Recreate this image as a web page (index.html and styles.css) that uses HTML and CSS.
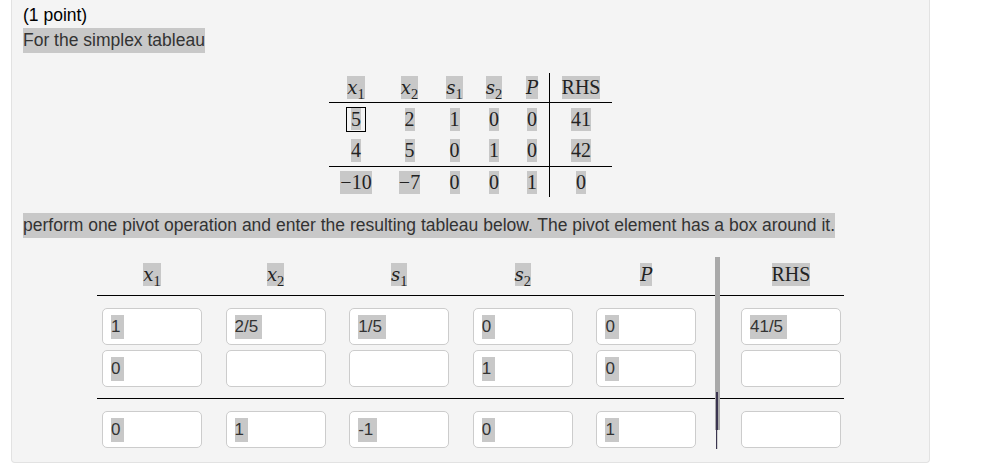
FILE: index.html
```html
<!DOCTYPE html>
<html>
<head>
<meta charset="utf-8">
<link rel="stylesheet" href="styles.css">
</head>
<body>
<div class="panel">
  <p class="line plain">(1 point)</p>
  <p class="line"><span class="hl">For the simplex tableau</span></p>

  <div class="tab1">
    <div class="c h"><span class="hl"><i>x</i><sub>1</sub></span></div>
    <div class="c h"><span class="hl"><i>x</i><sub>2</sub></span></div>
    <div class="c h"><span class="hl"><i>s</i><sub>1</sub></span></div>
    <div class="c h"><span class="hl"><i>s</i><sub>2</sub></span></div>
    <div class="c h"><span class="hl"><i>P</i></span></div>
    <div class="c h v"><span class="hl">RHS</span></div>

    <div class="c"><span class="box"><span class="hl">5</span></span></div>
    <div class="c"><span class="hl">2</span></div>
    <div class="c"><span class="hl">1</span></div>
    <div class="c"><span class="hl">0</span></div>
    <div class="c"><span class="hl">0</span></div>
    <div class="c v"><span class="hl">41</span></div>

    <div class="c"><span class="hl">4</span></div>
    <div class="c"><span class="hl">5</span></div>
    <div class="c"><span class="hl">0</span></div>
    <div class="c"><span class="hl">1</span></div>
    <div class="c"><span class="hl">0</span></div>
    <div class="c v"><span class="hl">42</span></div>

    <div class="c t"><span class="hl">−10</span></div>
    <div class="c t"><span class="hl">−7</span></div>
    <div class="c t"><span class="hl">0</span></div>
    <div class="c t"><span class="hl">0</span></div>
    <div class="c t"><span class="hl">1</span></div>
    <div class="c t v"><span class="hl">0</span></div>
  </div>

  <p class="line para"><span class="hl">perform one pivot operation and enter the resulting tableau below. The pivot element has a box around it.</span></p>

  <div class="tab2">
    <div class="bar"><div class="bar-a"></div><div class="bar-b"></div><div class="bar-c"></div></div>

    <div class="hd"><span class="hl"><i>x</i><sub>1</sub></span></div>
    <div class="hd"><span class="hl"><i>x</i><sub>2</sub></span></div>
    <div class="hd"><span class="hl"><i>s</i><sub>1</sub></span></div>
    <div class="hd"><span class="hl"><i>s</i><sub>2</sub></span></div>
    <div class="hd"><span class="hl"><i>P</i></span></div>
    <div class="hd last"><span class="hl">RHS</span></div>

    <div class="cell r1"><div class="inp"><span class="val">1</span></div></div>
    <div class="cell r1"><div class="inp"><span class="val">2/5</span></div></div>
    <div class="cell r1"><div class="inp"><span class="val">1/5</span></div></div>
    <div class="cell r1"><div class="inp"><span class="val">0</span></div></div>
    <div class="cell r1"><div class="inp"><span class="val">0</span></div></div>
    <div class="cell r1 last"><div class="inp"><span class="val">41/5</span></div></div>

    <div class="cell r2"><div class="inp"><span class="val">0</span></div></div>
    <div class="cell r2"><div class="inp"></div></div>
    <div class="cell r2"><div class="inp"></div></div>
    <div class="cell r2"><div class="inp"><span class="val">1</span></div></div>
    <div class="cell r2"><div class="inp"><span class="val">0</span></div></div>
    <div class="cell r2 last"><div class="inp"></div></div>

    <div class="cell r3"><div class="inp"><span class="val">0</span></div></div>
    <div class="cell r3"><div class="inp"><span class="val">1</span></div></div>
    <div class="cell r3"><div class="inp"><span class="val">-1</span></div></div>
    <div class="cell r3"><div class="inp"><span class="val">0</span></div></div>
    <div class="cell r3"><div class="inp"><span class="val">1</span></div></div>
    <div class="cell r3 last"><div class="inp"></div></div>
  </div>
</div>
</body>
</html>
```

FILE: styles.css
```css
html, body {
  margin: 0;
  padding: 0;
  background: #ffffff;
}

.panel {
  box-sizing: border-box;
  width: 919px;
  margin-left: 11px;
  padding: 3px 11px 13px;
  background: #f4f4f4;
  border: 1px solid #e2e2e2;
  border-top: 0;
  border-radius: 0 0 4px 4px;
}

.line {
  margin: 0;
  font-family: "Liberation Sans", Arial, sans-serif;
  font-size: 17.5px;
  line-height: 25px;
  color: #333;
}

.line .hl {
  display: inline-block;
  line-height: 25px;
}

.plain {
  color: #000;
}

.hl {
  background: #c8c8c8;
}

.para {
  margin-top: 16px;
}

/* first (static) tableau */
.tab1 {
  display: grid;
  grid-template-columns: 54px 53px 37px 42px 34px 63px;
  grid-template-rows: 30px 32px 31px 31px;
  width: max-content;
  margin: 20px auto 0;
  font-family: "Liberation Serif", "Times New Roman", serif;
  font-size: 20px;
  color: #222;
}

.tab1 .c {
  box-sizing: border-box;
  display: flex;
  align-items: center;
  justify-content: center;
}

.tab1 .h {
  border-bottom: 1px solid #000;
  align-items: flex-end;
  padding-bottom: 3px;
}

.tab1 .v {
  border-left: 1px solid #000;
}

.tab1 .t {
  border-top: 1px solid #000;
}

.box {
  display: inline-block;
  border: 1px solid #000;
  padding: 0 4px;
  line-height: 23px;
}

i {
  font-family: "DejaVu Serif", "Liberation Serif", serif;
  font-style: italic;
  font-size: 18px;
}

sub {
  font-size: 0.72em;
  vertical-align: -0.35em;
  line-height: 0;
}

/* second (answer) tableau */
.tab2 {
  display: grid;
  grid-template-columns: repeat(5, 123.6px) 5px 124px;
  width: max-content;
  margin: 19px auto 0;
}

.bar {
  grid-column: 6;
  grid-row: 1 / span 4;
  display: flex;
  flex-direction: column;
}

.bar-a {
  flex: 1;
  background: #a9a9a9;
}

.bar-b {
  height: 38px;
  background: linear-gradient(to right, #a9a9a9 0 1px, #3b3550 1px 2.5px, #a9a9a9 2.5px);
}

.bar-c {
  height: 19px;
  background: linear-gradient(to right, transparent 0 1px, #3b3550 1px 2px, #d0d0d0 2px 3px, transparent 3px);
}

.hd {
  box-sizing: border-box;
  height: 39px;
  border-bottom: 1px solid #000;
  display: flex;
  align-items: center;
  justify-content: center;
  padding: 0 18.6px 3px 5px;
  font-family: "Liberation Serif", "Times New Roman", serif;
  font-size: 20px;
  color: #222;
}

.hd.last {
  padding: 0 3px 3px 21px;
}

.cell {
  padding-left: 5px;
}

.cell.last {
  padding-left: 21px;
  padding-right: 3px;
}

.r1 {
  padding-top: 12px;
  padding-bottom: 3px;
}

.r2 {
  padding-top: 2px;
  padding-bottom: 11px;
  border-bottom: 1px solid #000;
}

.r3 {
  padding-top: 12px;
  padding-bottom: 1px;
}

.inp {
  box-sizing: border-box;
  width: 100px;
  height: 37px;
  border: 1px solid #cccccc;
  border-radius: 5px;
  background: #ffffff;
  padding-left: 8px;
  display: flex;
  align-items: center;
  font-family: "Liberation Sans", Arial, sans-serif;
  font-size: 17px;
  color: #333;
}

.val {
  background: #c8c8c8;
  padding: 2px 4px 2px 0;
}
```
